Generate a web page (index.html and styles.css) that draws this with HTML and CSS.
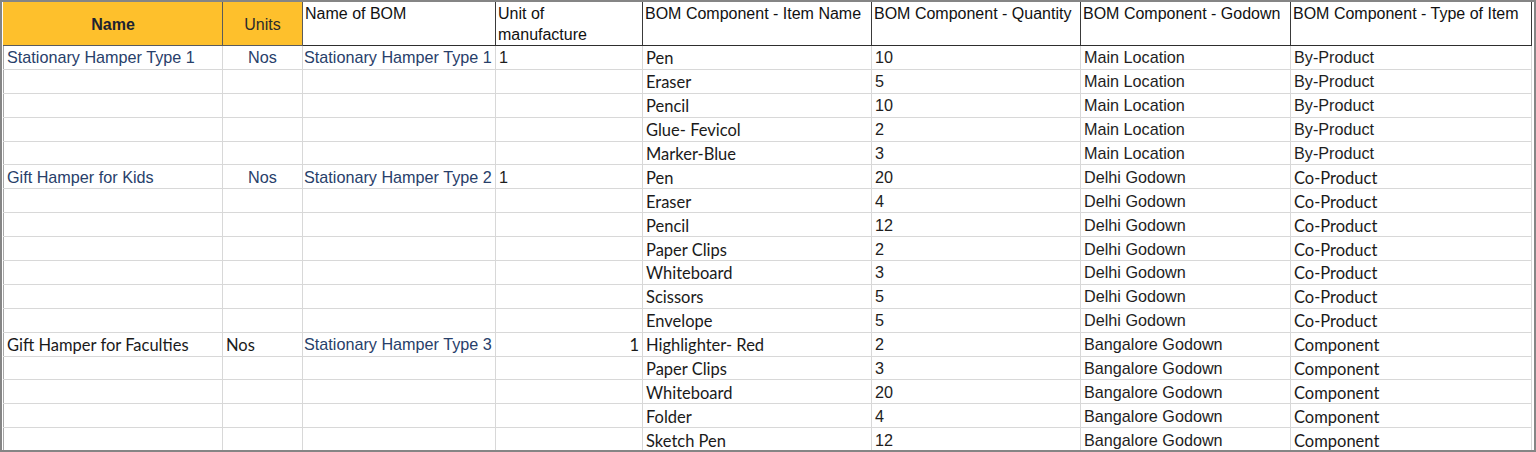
FILE: index.html
```html
<!DOCTYPE html>
<html>
<head>
<meta charset="utf-8">
<link rel="stylesheet" href="styles.css">
</head>
<body>
<div class="sheet">
<table class="grid">
<colgroup>
<col class="c-name"><col class="c-units"><col class="c-bom"><col class="c-uom"><col class="c-item"><col class="c-qty"><col class="c-god"><col class="c-type">
</colgroup>
<thead>
<tr>
<th class="hy hb">Name</th>
<th class="hy">Units</th>
<th class="hw">Name of BOM</th>
<th class="hw">Unit of<br>manufacture</th>
<th class="hw">BOM Component - Item Name</th>
<th class="hw">BOM Component - Quantity</th>
<th class="hw">BOM Component - Godown</th>
<th class="hw">BOM Component - Type of Item</th>
</tr>
</thead>
<tbody>
<tr><td class="ar blue">Stationary Hamper Type 1</td><td class="ar blue ctr">Nos</td><td class="ar blue tight">Stationary Hamper Type 1</td><td class="ar">1</td><td class="cb">Pen</td><td class="ar">10</td><td class="ar">Main Location</td><td class="ar">By-Product</td></tr>
<tr><td></td><td></td><td></td><td></td><td class="cb">Eraser</td><td class="ar">5</td><td class="ar">Main Location</td><td class="ar">By-Product</td></tr>
<tr><td></td><td></td><td></td><td></td><td class="cb">Pencil</td><td class="ar">10</td><td class="ar">Main Location</td><td class="ar">By-Product</td></tr>
<tr><td></td><td></td><td></td><td></td><td class="cb">Glue- Fevicol</td><td class="ar">2</td><td class="ar">Main Location</td><td class="ar">By-Product</td></tr>
<tr><td></td><td></td><td></td><td></td><td class="cb">Marker-Blue</td><td class="ar">3</td><td class="ar">Main Location</td><td class="ar">By-Product</td></tr>
<tr><td class="ar blue">Gift Hamper for Kids</td><td class="ar blue ctr">Nos</td><td class="ar blue tight">Stationary Hamper Type 2</td><td class="ar">1</td><td class="cb">Pen</td><td class="ar">20</td><td class="ar">Delhi Godown</td><td class="cb">Co-Product</td></tr>
<tr><td></td><td></td><td></td><td></td><td class="cb">Eraser</td><td class="ar">4</td><td class="ar">Delhi Godown</td><td class="cb">Co-Product</td></tr>
<tr><td></td><td></td><td></td><td></td><td class="cb">Pencil</td><td class="ar">12</td><td class="ar">Delhi Godown</td><td class="cb">Co-Product</td></tr>
<tr><td></td><td></td><td></td><td></td><td class="cb">Paper Clips</td><td class="ar">2</td><td class="ar">Delhi Godown</td><td class="cb">Co-Product</td></tr>
<tr><td></td><td></td><td></td><td></td><td class="cb">Whiteboard</td><td class="ar">3</td><td class="ar">Delhi Godown</td><td class="cb">Co-Product</td></tr>
<tr><td></td><td></td><td></td><td></td><td class="cb">Scissors</td><td class="ar">5</td><td class="ar">Delhi Godown</td><td class="cb">Co-Product</td></tr>
<tr><td></td><td></td><td></td><td></td><td class="cb">Envelope</td><td class="ar">5</td><td class="ar">Delhi Godown</td><td class="cb">Co-Product</td></tr>
<tr><td class="cb">Gift Hamper for Faculties</td><td class="cb">Nos</td><td class="ar blue tight">Stationary Hamper Type 3</td><td class="cb rt">1</td><td class="cb">Highlighter- Red</td><td class="ar">2</td><td class="ar">Bangalore Godown</td><td class="cb">Component</td></tr>
<tr><td></td><td></td><td></td><td></td><td class="cb">Paper Clips</td><td class="ar">3</td><td class="ar">Bangalore Godown</td><td class="cb">Component</td></tr>
<tr><td></td><td></td><td></td><td></td><td class="cb">Whiteboard</td><td class="ar">20</td><td class="ar">Bangalore Godown</td><td class="cb">Component</td></tr>
<tr><td></td><td></td><td></td><td></td><td class="cb">Folder</td><td class="ar">4</td><td class="ar">Bangalore Godown</td><td class="cb">Component</td></tr>
<tr><td></td><td></td><td></td><td></td><td class="cb">Sketch Pen</td><td class="ar">12</td><td class="ar">Bangalore Godown</td><td class="cb">Component</td></tr>
</tbody>
</table>
</div>
</body>
</html>
```
FILE: styles.css
```css
html, body {
  margin: 0;
  padding: 0;
  background: #ffffff;
}

.sheet {
  width: 1536px;
  height: 452px;
  box-sizing: border-box;
  border: 2px solid #858585;
  overflow: hidden;
  background: #ffffff;
  padding-left: 1px;
}

.grid {
  border-collapse: collapse;
  table-layout: fixed;
  width: 1529px;
  font-family: "Liberation Sans", Arial, sans-serif;
  font-size: 16px;
  color: #1a1a1a;
}

.c-name { width: 219px; }
.c-units { width: 80px; }
.c-bom { width: 193px; }
.c-uom { width: 147px; }
.c-item { width: 229px; }
.c-qty { width: 209px; }
.c-god { width: 210px; }
.c-type { width: 241px; }

.grid th {
  height: 43px;
  padding: 0 3px;
  box-sizing: border-box;
  border: 1px solid #3a3a3a;
  border-bottom: 1px solid #2e2e2e;
  border-top: none;
  font-weight: normal;
  overflow: hidden;
}

.grid th.hy {
  background: #fec02c;
  text-align: center;
  vertical-align: middle;
  padding-top: 2px;
  color: #2b2b2b;
  border-color: #5b5b5b;
  border-left-color: #fec02c;
}

.grid th.hb {
  font-weight: bold;
  color: #1c2331;
}

.grid th.hw {
  background: #ffffff;
  text-align: left;
  vertical-align: top;
  line-height: 21px;
  padding-top: 1px;
  padding-left: 2px;
  color: #111111;
}

.grid th.hw + th.hw,
.grid th.hy + th.hw {
  border-left-color: #2e2e2e;
}

.grid td {
  height: 23.9px;
  padding: 0 3px;
  box-sizing: border-box;
  border: 1px solid #d8d8d8;
  vertical-align: middle;
  white-space: nowrap;
  overflow: hidden;
}

.grid td:first-child {
  border-left-color: #a8a8a8;
}

.ar {
  font-family: "Liberation Sans", Arial, sans-serif;
  font-size: 16.2px;
  color: #1e1e1e;
  padding-top: 1px !important;
}

.cb {
  font-family: Lato, "Open Sans", sans-serif;
  font-size: 16.5px;
  color: #1a1a1a;
  padding-top: 2px !important;
}

.blue {
  color: #28406a;
}

.tight {
  padding-left: 1px !important;
}

.ctr {
  text-align: center;
}

.rt {
  text-align: right;
}
```
